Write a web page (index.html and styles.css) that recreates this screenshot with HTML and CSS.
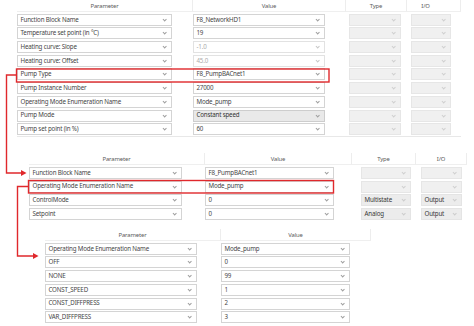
FILE: index.html
```html
<!DOCTYPE html>
<html>
<head>
<meta charset="utf-8">
<link rel="stylesheet" href="styles.css">
</head>
<body>
<div class="canvas">
  <section class="panel p1">
    <div class="hd">Parameter</div>
    <div class="hd">Value</div>
    <div class="hd">Type</div>
    <div class="hd hd-io1">I/O</div>

    <div class="cell"><div class="box pbox dd">Function Block Name</div></div>
    <div class="cell"><div class="box vbox dd">F8_NetworkHD1</div></div>
    <div class="cell tcell"><div class="box tbox dd off"></div></div>
    <div class="cell icell"><div class="box ibox dd off"></div></div>

    <div class="cell"><div class="box pbox dd">Temperature set point (in °C)</div></div>
    <div class="cell"><div class="box vbox dd">19</div></div>
    <div class="cell tcell"><div class="box tbox dd off"></div></div>
    <div class="cell icell"><div class="box ibox dd off"></div></div>

    <div class="cell"><div class="box pbox dd">Heating curve: Slope</div></div>
    <div class="cell"><div class="box vbox dd dis">-1.0</div></div>
    <div class="cell tcell"><div class="box tbox dd off"></div></div>
    <div class="cell icell"><div class="box ibox dd off"></div></div>

    <div class="cell"><div class="box pbox dd">Heating curve: Offset</div></div>
    <div class="cell"><div class="box vbox dd dis">45.0</div></div>
    <div class="cell tcell"><div class="box tbox dd off"></div></div>
    <div class="cell icell"><div class="box ibox dd off"></div></div>

    <div class="cell"><div class="box pbox dd">Pump Type</div></div>
    <div class="cell"><div class="box vbox dd">F8_PumpBACnet1</div></div>
    <div class="cell tcell"><div class="box tbox dd off"></div></div>
    <div class="cell icell"><div class="box ibox dd off"></div></div>

    <div class="cell"><div class="box pbox dd">Pump Instance Number</div></div>
    <div class="cell"><div class="box vbox dd">27000</div></div>
    <div class="cell tcell"><div class="box tbox dd off"></div></div>
    <div class="cell icell"><div class="box ibox dd off"></div></div>

    <div class="cell"><div class="box pbox dd">Operating Mode Enumeration Name</div></div>
    <div class="cell"><div class="box vbox dd">Mode_pump</div></div>
    <div class="cell tcell"><div class="box tbox dd off"></div></div>
    <div class="cell icell"><div class="box ibox dd off"></div></div>

    <div class="cell"><div class="box pbox dd">Pump Mode</div></div>
    <div class="cell"><div class="box vbox dd combo">Constant speed</div></div>
    <div class="cell tcell"><div class="box tbox dd off"></div></div>
    <div class="cell icell"><div class="box ibox dd off"></div></div>

    <div class="cell"><div class="box pbox dd">Pump set point (in %)</div></div>
    <div class="cell"><div class="box vbox dd">60</div></div>
    <div class="cell tcell"><div class="box tbox dd off"></div></div>
    <div class="cell icell"><div class="box ibox dd off"></div></div>
  </section>

  <section class="panel p2">
    <div class="hd">Parameter</div>
    <div class="hd">Value</div>
    <div class="hd">Type</div>
    <div class="hd">I/O</div>

    <div class="cell"><div class="box pbox2 dd">Function Block Name</div></div>
    <div class="cell"><div class="box vbox2 dd">F8_PumpBACnet1</div></div>
    <div class="cell tcell2"><div class="box tbox2 dd off"></div></div>
    <div class="cell icell2"><div class="box ibox2 dd off"></div></div>

    <div class="cell"><div class="box pbox2 dd">Operating Mode Enumeration Name</div></div>
    <div class="cell"><div class="box vbox2 dd">Mode_pump</div></div>
    <div class="cell tcell2"><div class="box tbox2 dd off"></div></div>
    <div class="cell icell2"><div class="box ibox2 dd off"></div></div>

    <div class="cell"><div class="box pbox2 dd">ControlMode</div></div>
    <div class="cell"><div class="box vbox2 dd">0</div></div>
    <div class="cell tcell2"><div class="box tbox2 dd offtxt">Multistate</div></div>
    <div class="cell icell2"><div class="box ibox2 dd offtxt">Output</div></div>

    <div class="cell"><div class="box pbox2 dd">Setpoint</div></div>
    <div class="cell"><div class="box vbox2 dd">0</div></div>
    <div class="cell tcell2"><div class="box tbox2 dd offtxt">Analog</div></div>
    <div class="cell icell2"><div class="box ibox2 dd offtxt">Output</div></div>
  </section>

  <section class="panel p3">
    <div class="hd">Parameter</div>
    <div class="hd">Value</div>

    <div class="cell"><div class="box pbox3 dd">Operating Mode Enumeration Name</div></div>
    <div class="cell"><div class="box vbox3 dd">Mode_pump</div></div>

    <div class="cell"><div class="box pbox3 dd">OFF</div></div>
    <div class="cell"><div class="box vbox3 dd">0</div></div>

    <div class="cell"><div class="box pbox3 dd">NONE</div></div>
    <div class="cell"><div class="box vbox3 dd">99</div></div>

    <div class="cell"><div class="box pbox3 dd">CONST_SPEED</div></div>
    <div class="cell"><div class="box vbox3 dd">1</div></div>

    <div class="cell"><div class="box pbox3 dd">CONST_DIFFPRESS</div></div>
    <div class="cell"><div class="box vbox3 dd">2</div></div>

    <div class="cell"><div class="box pbox3 dd">VAR_DIFFPRESS</div></div>
    <div class="cell"><div class="box vbox3 dd">3</div></div>
  </section>

  <svg class="connectors" width="474" height="326" viewBox="0 0 474 326">
    <rect x="16.5" y="69" width="312.5" height="13" class="red-box"/>
    <path d="M16.5 75 H6.5 V173 H22" class="red-line"/>
    <polygon points="21,170 26.5,173 21,176" class="red-head"/>
    <rect x="28.5" y="180.5" width="305" height="12.5" class="red-box"/>
    <path d="M28.5 186.5 H17.5 V256 H34" class="red-line"/>
    <polygon points="33,253 38.5,256 33,259" class="red-head"/>
  </svg>
</div>
</body>
</html>
```

FILE: styles.css
```css
* { box-sizing: border-box; }

body {
  margin: 0;
  background: #ffffff;
  font-family: "Noto Sans", "Open Sans", sans-serif;
  font-size: 6.2px;
  letter-spacing: -0.18px;
  color: #464646;
}

.canvas {
  position: relative;
  width: 474px;
  height: 326px;
  overflow: hidden;
}

.panel {
  display: grid;
  row-gap: 1.7px;
  grid-auto-rows: 12px;
}

.p1 {
  grid-template-columns: 176px 153px 61px 54px;
  margin-left: 17px;
  width: 444px;
  padding-bottom: 1.2px;
  border-bottom: 1px solid #e8e8e8;
}

.p2 {
  grid-template-columns: 176px 147px 64px 51px;
  margin-left: 29px;
  margin-top: 15.8px;
}

.p3 {
  grid-template-columns: 176px 150px;
  margin-left: 45px;
  margin-top: 9.2px;
}

.hd {
  text-align: center;
  line-height: 12px;
  color: #5a5a5a;
  font-size: 5.9px;
  letter-spacing: -0.12px;
  border-right: 1px solid #ededed;
  border-bottom: 1px solid #efefef;
}

.hd-io1 { padding-right: 16px; }

.cell { display: flex; }

.box {
  position: relative;
  height: 12px;
  border: 1px solid #d4d4d4;
  background: #ffffff;
  display: flex;
  align-items: center;
  padding-left: 2.5px;
  white-space: nowrap;
  overflow: hidden;
  line-height: 1;
}

.dd::after {
  content: "";
  position: absolute;
  right: 5px;
  top: 3px;
  width: 2.4px;
  height: 2.4px;
  border-right: 1px solid #a0a0a0;
  border-bottom: 1px solid #a0a0a0;
  transform: rotate(45deg);
}

.pbox { width: 155px; }
.vbox { width: 132px; }
.tcell { padding-left: 3px; }
.tbox { width: 52px; }
.icell { padding-left: 4px; }
.ibox { width: 40px; }

.pbox2 { width: 153px; }
.vbox2 { width: 129px; }
.tcell2 { padding-left: 9px; }
.tbox2 { width: 50px; }
.icell2 { padding-left: 5px; }
.ibox2 { width: 41px; }

.pbox3 { width: 152px; }
.vbox3 { width: 129px; }

.dis {
  color: #ababab;
  border-color: #e2e2e2;
}
.dis::after { border-color: #c8c8c8; }

.combo {
  background: #e9e9e9;
  border-color: #cdcdcd;
  color: #333333;
}

.off {
  background: #f0f0f0;
  border-color: #e6e6e6;
}
.off::after { border-color: #d0d0d0; }

.offtxt {
  background: #ececec;
  border-color: #e4e4e4;
  color: #383838;
}
.offtxt::after { border-color: #cccccc; }

.connectors {
  position: absolute;
  left: 0;
  top: 0;
  pointer-events: none;
}

.red-box {
  fill: none;
  stroke: #e0282c;
  stroke-width: 1.4;
}
.red-line {
  fill: none;
  stroke: #e0282c;
  stroke-width: 1.4;
}
.red-head { fill: #e0282c; }
```
